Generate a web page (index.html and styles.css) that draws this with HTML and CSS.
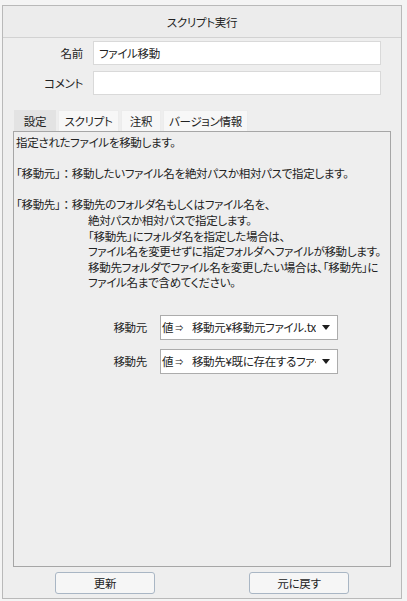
FILE: index.html
```html
<!DOCTYPE html>
<html lang="ja">
<head>
<meta charset="utf-8">
<title>スクリプト実行</title>
<link rel="stylesheet" href="styles.css">
</head>
<body>
<div class="dialog">
  <div class="dialog-title">スクリプト実行</div>

  <div class="fields">
    <div class="field">
      <span class="field-label">名前</span>
      <input class="field-input" type="text" value="ファイル移動">
    </div>
    <div class="field">
      <span class="field-label">コメント</span>
      <input class="field-input" type="text" value="">
    </div>
  </div>

  <div class="tabs">
    <div class="tab-bar">
      <span class="tab tab-active">設定</span>
      <span class="tab">スクリプト</span>
      <span class="tab">注釈</span>
      <span class="tab">バージョン情報</span>
    </div>
    <div class="tab-panel">
      <p class="desc">指定されたファイルを移動します。</p>
      <p class="desc blank">&nbsp;</p>
      <p class="desc">「移動元」<span class="colon">：</span>移動したいファイル名を絶対パスか相対パスで指定します。</p>
      <p class="desc blank">&nbsp;</p>
      <p class="desc">「移動先」<span class="colon">：</span>移動先のフォルダ名もしくはファイル名を、</p>
      <p class="desc indent">絶対パスか相対パスで指定します。</p>
      <p class="desc indent">「移動先」にフォルダ名を指定した場合は、</p>
      <p class="desc indent">ファイル名を変更せずに指定フォルダへファイルが移動します。</p>
      <p class="desc indent">移動先フォルダでファイル名を変更したい場合は、「移動先」に</p>
      <p class="desc indent">ファイル名まで含めてください。</p>

      <div class="params">
        <div class="param">
          <span class="param-label">移動元</span>
          <div class="combo">
            <span class="combo-value">値<span class="arrow-mark">⇒</span>移動元¥移動元ファイル.txt</span>
            <span class="combo-arrow"></span>
          </div>
        </div>
        <div class="param">
          <span class="param-label">移動先</span>
          <div class="combo">
            <span class="combo-value">値<span class="arrow-mark">⇒</span>移動先¥既に存在するファイル.txt</span>
            <span class="combo-arrow"></span>
          </div>
        </div>
      </div>
    </div>
  </div>

  <div class="actions">
    <button class="btn" type="button">更新</button>
    <button class="btn" type="button">元に戻す</button>
  </div>
</div>
</body>
</html>
```

FILE: styles.css
```css
html, body {
  margin: 0;
  padding: 0;
}

body {
  background: #f4f4f4;
  font-family: "Noto Sans CJK JP", "Noto Sans", sans-serif;
  font-size: 11.5px;
  letter-spacing: -0.3px;
  font-feature-settings: "palt";
  color: #222222;
}

.dialog {
  box-sizing: border-box;
  width: 400px;
  height: 594px;
  margin: 5px 0 0 2px;
  border: 1px solid #b9b9b9;
  background: #eeeeee;
  display: flex;
  flex-direction: column;
}

.dialog-title {
  height: 31px;
  border-bottom: 1px solid #d2d2d2;
  background: #ececec;
  display: flex;
  align-items: center;
  justify-content: center;
}

/* name / comment rows */
.fields {
  display: flex;
  flex-direction: column;
  gap: 6px;
  padding-top: 3px;
}

.field {
  display: flex;
  align-items: center;
}

.field-label {
  width: 80px;
  text-align: right;
  padding-right: 10px;
  line-height: 24px;
}

.field-input {
  box-sizing: border-box;
  width: 288px;
  height: 24px;
  margin: 0;
  border: 1px solid #d9d9d9;
  background: #ffffff;
  font: inherit;
  letter-spacing: inherit;
  font-feature-settings: "palt";
  color: inherit;
  padding: 0 5px;
  outline: none;
}

/* tab control */
.tabs {
  margin: 15px 10px 0 10px;
  display: flex;
  flex-direction: column;
  flex: 1;
}

.tab-bar {
  display: flex;
  gap: 2px;
  padding-left: 1px;
  height: 21px;
}

.tab {
  box-sizing: border-box;
  height: 21px;
  display: flex;
  align-items: center;
  justify-content: center;
  white-space: nowrap;
  background: #f7f7f7;
  border: 1px solid #ececec;
  border-bottom: none;
}

.tab-active {
  width: 42px;
  background: #e3e3e3;
  border-color: #e3e3e3;
}

.tab:nth-child(2) { width: 61px; }
.tab:nth-child(3) { width: 40px; }
.tab:nth-child(4) { width: 85px; }

.tab-panel {
  box-sizing: border-box;
  width: 378px;
  height: 436px;
  border: 1px solid #a6a6a6;
  background: #eeeeee;
  padding: 3px 2px 0 2px;
  display: flex;
  flex-direction: column;
}

.desc {
  margin: 0;
  line-height: 15.6px;
  white-space: nowrap;
}

.desc .colon {
  font-feature-settings: normal;
}

.desc.indent {
  padding-left: 72px;
}

/* value pickers */
.params {
  display: flex;
  flex-direction: column;
  gap: 9px;
  margin-top: 24px;
  padding-left: 95px;
}

.param {
  display: flex;
  align-items: center;
  gap: 13px;
}

.param-label {
  width: 36px;
  text-align: right;
  white-space: nowrap;
}

.combo {
  box-sizing: border-box;
  width: 178px;
  height: 25px;
  border: 1px solid #acacac;
  background: #ffffff;
  display: flex;
  align-items: center;
  overflow: hidden;
}

.combo-value {
  flex: 1;
  min-width: 0;
  overflow: hidden;
  white-space: nowrap;
  padding-left: 1px;
}

.arrow-mark {
  font-size: 8px;
  padding: 0 9px 0 2px;
  vertical-align: 1px;
}

.combo-arrow {
  flex: none;
  width: 21px;
  height: 23px;
  background: #ffffff;
  position: relative;
}

.combo-arrow::after {
  content: "";
  position: absolute;
  left: 6px;
  top: 9px;
  border-left: 4px solid transparent;
  border-right: 4px solid transparent;
  border-top: 5px solid #1e1e1e;
}

/* bottom buttons */
.actions {
  display: flex;
  justify-content: space-between;
  padding: 5px 52px 4px 52px;
}

.btn {
  box-sizing: border-box;
  width: 100px;
  height: 22px;
  margin: 0;
  border: 1px solid #a9b6c4;
  border-radius: 3px;
  background: #f6f6f6;
  font: inherit;
  letter-spacing: inherit;
  font-feature-settings: "palt";
  color: inherit;
  padding: 0;
}
```
